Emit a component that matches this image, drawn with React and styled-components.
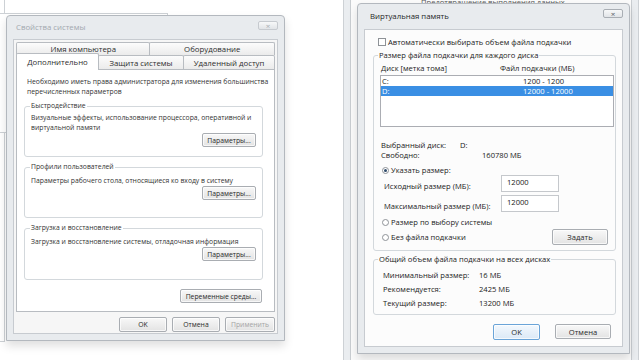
import React from "react";
import styled, { createGlobalStyle, css } from "styled-components";

const GlobalStyle = createGlobalStyle`
  html, body {
    margin: 0;
    padding: 0;
    background: #ffffff;
  }
  body {
    font-family: "Open Sans", "Noto Sans", sans-serif;
    color: #2a2a2a;
  }
`;

const Desktop = styled.div`
  position: relative;
  width: 640px;
  height: 360px;
  overflow: hidden;
  background: #ffffff;
`;

// windows sit on the desktop at their own place
const BackWindow = styled.div`
  position: absolute;
  left: ${p => p.$x}px;
  top: ${p => p.$y}px;
  width: ${p => p.$w}px;
  height: ${p => p.$h}px;
  box-sizing: border-box;
  border: 1px solid #cdd1d5;
  background: ${p => p.$bg || "#ffffff"};
  display: flex;
  flex-direction: column;
  padding: ${p => p.$pad || "0"};
`;

const BackClient = styled.div`
  flex: 1;
  background: #fbfbfb;
  border: 1px solid #c9cdd1;
  border-top: none;
  font-size: 7.6px;
  color: #555;
  padding-left: ${p => p.$indent}px;
  line-height: 10px;
  white-space: nowrap;
`;

const Window = styled.div`
  position: absolute;
  left: ${p => p.$x}px;
  top: ${p => p.$y}px;
  width: ${p => p.$w}px;
  height: ${p => p.$h}px;
  box-sizing: border-box;
  display: flex;
  flex-direction: column;
  background: #e8ebee;
  border: 1px solid #b3b8be;
  border-radius: 4px 4px 0 0;
  padding: 0 6px 6px;
  box-shadow: 0 5px 10px rgba(0, 0, 0, 0.13);
  white-space: nowrap;
`;

const TitleBar = styled.div`
  display: flex;
  align-items: center;
  justify-content: space-between;
  height: ${p => p.$h}px;
  margin: 0 -6px;
  padding: 0 6px ${p => p.$lift || 0}px ${p => p.$indent}px;
  font-size: 7.8px;
  color: ${p => (p.$inactive ? "#a2a8ae" : "#262626")};
`;

const CloseButton = styled.div`
  align-self: flex-start;
  margin-top: ${p => p.$top}px;
  width: 20px;
  height: 9px;
  box-sizing: border-box;
  border: 1px solid ${p => (p.$inactive ? "#c6cacf" : "#a9aeb4")};
  border-radius: 2px;
  background: linear-gradient(#f7f8f9, #e1e4e7);
  display: flex;
  align-items: center;
  justify-content: center;
  font-size: 8px;
  line-height: 1;
  color: ${p => (p.$inactive ? "#a8adb2" : "#5a5f66")};
`;

const Client = styled.div`
  flex: 1;
  display: flex;
  flex-direction: column;
  min-height: 0;
  background: ${p => p.$bg || "#f6f6f6"};
  border: 1px solid #c7cbd0;
  padding: ${p => p.$pad};
`;

/* tabs */
const TabStrip = styled.div`
  display: flex;
  flex-direction: column;
`;

const TabRow = styled.div`
  display: flex;
  height: ${p => p.$h}px;
  padding-left: 1px;
`;

const Tab = styled.div`
  width: ${p => p.$w}px;
  box-sizing: border-box;
  margin-left: -1px;
  border: 1px solid #b8bcc1;
  border-bottom: none;
  border-radius: 2px 2px 0 0;
  background: linear-gradient(#fcfcfc, #ebebeb);
  display: flex;
  align-items: center;
  justify-content: center;
  font-size: 7.8px;
  color: #2e2e2e;
  ${p =>
    p.$active &&
    css`
      position: relative;
      z-index: 2;
      background: #ffffff;
      margin-top: -2px;
      margin-bottom: -1px;
      height: calc(100% + 3px);
    `}
`;

const TabPanel = styled.div`
  height: 244px;
  box-sizing: border-box;
  display: flex;
  flex-direction: column;
  background: #ffffff;
  border: 1px solid #b8bcc1;
  padding: 7px 11px 0 7px;
`;

const Note = styled.p`
  margin: 0 0 4px 3px;
  font-size: 6.8px;
  line-height: 10px;
  color: #333;
`;

/* group boxes */
const Group = styled.fieldset`
  box-sizing: border-box;
  display: flex;
  flex-direction: column;
  height: ${p => (p.$h ? `${p.$h}px` : "auto")};
  margin: ${p => p.$gap || 0}px 0 0;
  padding: ${p => p.$pad};
  border: 1px solid #d3d8dc;
  border-radius: 3px;
  min-width: 0;
`;

const Legend = styled.legend`
  margin-left: ${p => p.$shift || 0}px;
  padding: 0 1px;
  font-size: ${p => p.$fs}px;
  line-height: 10px;
  color: ${p => p.$color || "#333"};
`;

const GroupText = styled.div`
  font-size: 6.8px;
  line-height: 10px;
  color: #333;
`;

const ButtonRow = styled.div`
  display: flex;
  justify-content: flex-end;
  gap: ${p => p.$gap || 0}px;
  margin-top: ${p => (p.$auto ? "auto" : `${p.$top || 0}px`)};
  padding-right: ${p => p.$right || 0}px;
`;

const Button = styled.button`
  box-sizing: border-box;
  width: ${p => p.$w}px;
  height: ${p => p.$h || 15}px;
  padding: 0;
  font-family: inherit;
  font-size: ${p => p.$fs || 6.8}px;
  color: ${p => (p.disabled ? "#a4a4a4" : "#2a2a2a")};
  border: 1px solid ${p => (p.$primary ? "#6aa4d8" : "#a9adb2")};
  border-radius: 2px;
  background: ${p =>
    p.$primary
      ? "linear-gradient(#f3f8fd, #dbe9f6)"
      : "linear-gradient(#f8f8f8, #e3e3e3)"};
  box-shadow: inset 0 0 0 1px rgba(255, 255, 255, 0.7);
`;

/* virtual memory parts */
const CheckRow = styled.label`
  display: flex;
  align-items: center;
  gap: 2px;
  height: 10px;
  margin-left: 5px;
  font-size: 7.6px;
  color: #222;
`;

const CheckBox = styled.span`
  width: 8px;
  height: 8px;
  box-sizing: border-box;
  border: 1px solid #8e9297;
  background: #fff;
`;

const ColumnHeads = styled.div`
  display: grid;
  grid-template-columns: 119px 1fr;
  padding-left: 1px;
  font-size: 7.6px;
  line-height: 10px;
  color: #222;
`;

const DriveList = styled.div`
  height: 52px;
  margin-top: 2px;
  box-sizing: border-box;
  border: 1px solid #abadb3;
  background: #ffffff;
`;

const DriveRow = styled.div`
  display: grid;
  grid-template-columns: 141px 1fr;
  height: 10px;
  padding-left: 1px;
  font-size: 7.6px;
  line-height: 10px;
  color: ${p => (p.$selected ? "#ffffff" : "#222")};
  background: ${p => (p.$selected ? "#3a8fe4" : "transparent")};
`;

const InfoRow = styled.div`
  display: grid;
  grid-template-columns: ${p => p.$label}px 1fr;
  height: 10px;
  margin-top: ${p => p.$top || 0}px;
  padding-left: ${p => p.$indent || 0}px;
  font-size: 7.6px;
  line-height: 10px;
  color: #222;
`;

const RadioRow = styled.div`
  display: flex;
  align-items: center;
  gap: 2px;
  height: ${p => p.$h || 10}px;
  margin-top: ${p => p.$top || 0}px;
  padding: 0 6px 0 2px;
  font-size: 7.6px;
  color: #222;
`;

const Radio = styled.span`
  width: 7px;
  height: 7px;
  box-sizing: border-box;
  border-radius: 50%;
  border: 1px solid #8e9297;
  background: #fff;
  display: flex;
  align-items: center;
  justify-content: center;
  &::after {
    content: "";
    width: 3px;
    height: 3px;
    border-radius: 50%;
    background: ${p => (p.$checked ? "#2d4a6a" : "transparent")};
  }
`;

const RadioLabel = styled.span`
  flex: 1;
`;

const FieldRow = styled.div`
  display: grid;
  grid-template-columns: 117px 58px;
  align-items: center;
  height: 17px;
  margin-top: ${p => p.$top || 0}px;
  padding-left: 4px;
  font-size: 7.6px;
  color: #222;
`;

const FieldLabel = styled.span`
  padding-top: 4px;
`;

const Field = styled.div`
  height: 17px;
  box-sizing: border-box;
  border: 1px solid #c5c8cc;
  background: #fff;
  padding: 1px 0 0 5px;
  font-size: 7.6px;
  line-height: 10px;
`;

function SystemProperties() {
  return (
    <Window $x={6} $y={15} $w={279} $h={326}>
      <TitleBar $h={21} $indent={9} $lift={2} $inactive>
        <span>Свойства системы</span>
        <CloseButton $top={5} $inactive>×</CloseButton>
      </TitleBar>
      <Client $pad="2px 2px 1px 2px">
        <TabStrip>
          <TabRow $h={13}>
            <Tab $w={135}>Имя компьютера</Tab>
            <Tab $w={126}>Оборудование</Tab>
          </TabRow>
          <TabRow $h={14}>
            <Tab $w={83} $active>
              Дополнительно
            </Tab>
            <Tab $w={86}>Защита системы</Tab>
            <Tab $w={92}>Удаленный доступ</Tab>
          </TabRow>
        </TabStrip>
        <TabPanel>
          <Note>
            Необходимо иметь права администратора для изменения большинства
            <br />
            перечисленных параметров
          </Note>
          <Group $h={56} $pad="2px 6px 4px 6px">
            <Legend $fs={6.8} $shift={-1}>
              Быстродействие
            </Legend>
            <GroupText>
              Визуальные эффекты, использование процессора, оперативной и
              <br />
              виртуальной памяти
            </GroupText>
            <ButtonRow $auto>
              <Button $w={54} $h={14}>
                Параметры...
              </Button>
            </ButtonRow>
          </Group>
          <Group $h={56} $gap={5} $pad="4px 6px 4px 6px">
            <Legend $fs={6.8} $shift={-1}>
              Профили пользователей
            </Legend>
            <GroupText>
              Параметры рабочего стола, относящиеся ко входу в систему
            </GroupText>
            <ButtonRow $auto>
              <Button $w={54} $h={14}>
                Параметры...
              </Button>
            </ButtonRow>
          </Group>
          <Group $h={57} $gap={5} $pad="4px 6px 6px 6px">
            <Legend $fs={6.8} $shift={-1}>
              Загрузка и восстановление
            </Legend>
            <GroupText>
              Загрузка и восстановление системы, отладочная информация
            </GroupText>
            <ButtonRow $auto>
              <Button $w={54} $h={14}>
                Параметры...
              </Button>
            </ButtonRow>
          </Group>
          <ButtonRow $top={9} $right={1}>
            <Button $w={82} $h={14}>
              Переменные среды...
            </Button>
          </ButtonRow>
        </TabPanel>
        <ButtonRow $top={5} $gap={5}>
          <Button $w={48}>OK</Button>
          <Button $w={48}>Отмена</Button>
          <Button $w={50} disabled>
            Применить
          </Button>
        </ButtonRow>
      </Client>
    </Window>
  );
}

function VirtualMemory() {
  return (
    <Window $x={357} $y={3} $w={273} $h={351}>
      <TitleBar $h={23} $indent={12} $lift={2}>
        <span>Виртуальная память</span>
        <CloseButton $top={5}>×</CloseButton>
      </TitleBar>
      <Client $pad="7px 6px 0 8px" $bg="#fcfcfc">
        <CheckRow>
          <CheckBox />
          Автоматически выбирать объем файла подкачки
        </CheckRow>
        <Group $gap={3} $pad="3px 1px 5px 6px">
          <Legend $fs={7.6} $shift={-2} $color="#222">
            Размер файла подкачки для каждого диска
          </Legend>
          <ColumnHeads>
            <span>Диск [метка тома]</span>
            <span>Файл подкачки (МБ)</span>
          </ColumnHeads>
          <DriveList>
            <DriveRow>
              <span>C:</span>
              <span>1200 - 1200</span>
            </DriveRow>
            <DriveRow $selected>
              <span>D:</span>
              <span>12000 - 12000</span>
            </DriveRow>
          </DriveList>
          <InfoRow $label={79} $top={13} $indent={1}>
            <span>Выбранный диск:</span>
            <span>D:</span>
          </InfoRow>
          <InfoRow $label={101} $indent={1}>
            <span>Свободно:</span>
            <span>160780 МБ</span>
          </InfoRow>
          <RadioRow $top={5}>
            <Radio $checked />
            <RadioLabel>Указать размер:</RadioLabel>
          </RadioRow>
          <FieldRow>
            <FieldLabel>Исходный размер (МБ):</FieldLabel>
            <Field>12000</Field>
          </FieldRow>
          <FieldRow $top={3}>
            <FieldLabel>Максимальный размер (МБ):</FieldLabel>
            <Field>12000</Field>
          </FieldRow>
          <RadioRow $top={5}>
            <Radio />
            <RadioLabel>Размер по выбору системы</RadioLabel>
          </RadioRow>
          <RadioRow $top={2} $h={16}>
            <Radio />
            <RadioLabel>Без файла подкачки</RadioLabel>
            <Button $w={56} $h={16} $fs={7.6}>
              Задать
            </Button>
          </RadioRow>
        </Group>
        <Group $gap={3} $pad="6px 1px 6px 9px">
          <Legend $fs={7.6} $shift={-5} $color="#222">
            Общий объем файла подкачки на всех дисках
          </Legend>
          <InfoRow $label={96}>
            <span>Минимальный размер:</span>
            <span>16 МБ</span>
          </InfoRow>
          <InfoRow $label={96} $top={4}>
            <span>Рекомендуется:</span>
            <span>2425 МБ</span>
          </InfoRow>
          <InfoRow $label={96} $top={4}>
            <span>Текущий размер:</span>
            <span>13200 МБ</span>
          </InfoRow>
        </Group>
        <ButtonRow $top={9} $gap={15} $right={5}>
          <Button $w={47} $h={16} $fs={7.6} $primary>
            OK
          </Button>
          <Button $w={56} $h={15} $fs={7.6}>
            Отмена
          </Button>
        </ButtonRow>
      </Client>
    </Window>
  );
}

export default function App() {
  return (
    <>
      <GlobalStyle />
      <Desktop>
        <BackWindow $x={-300} $y={-10} $w={305} $h={352} />
        <BackWindow $x={-10} $y={13} $w={178} $h={120} />
        <BackWindow $x={343} $y={-4} $w={296} $h={380} $bg="#eaedf0" $pad="0 6px">
          <BackClient $indent={70}>Предотвращение выполнения данных</BackClient>
        </BackWindow>
        <SystemProperties />
        <VirtualMemory />
      </Desktop>
    </>
  );
}
